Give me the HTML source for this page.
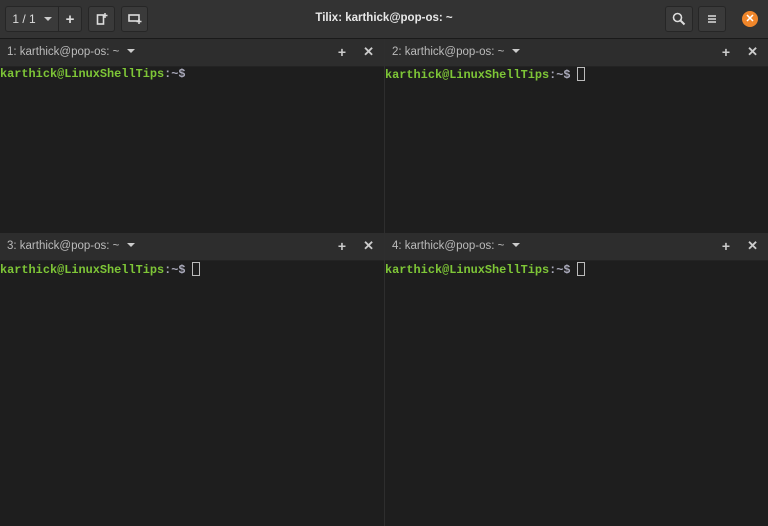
<!DOCTYPE html>
<html><head><style>
body{margin:0;width:768px;height:526px;background:#1e1e1e;font-family:"Liberation Sans",sans-serif;overflow:hidden;position:relative}
.hdr{position:absolute;left:0;top:0;width:768px;height:38px;background:#333333;border-bottom:1px solid #1a1a1a}
.btn{position:absolute;top:6px;height:26px;background:#3a3a3a;border:1px solid #262626;border-radius:3px;box-sizing:border-box;color:#ddd;font-size:12px;display:flex;align-items:center;justify-content:center}
.title{position:absolute;top:12px;left:0;width:768px;text-align:center;color:#e8e8e8;font-size:11.5px;font-weight:bold}
.pane{position:absolute;background:#1e1e1e}
.tb{position:absolute;left:0;top:0;right:0;height:27px;background:#2d2d2d;border-bottom:1px solid #232323;color:#bbb;font-size:11.5px}
.tb .t{position:absolute;left:7px;top:7px}
.tb .p{position:absolute;right:38px;top:5px;font-size:14px;font-weight:bold;color:#ccc}
.tb .x{position:absolute;right:10px;top:5px;font-size:13px;color:#ccc;font-weight:bold}
.pr{position:absolute;left:0;top:28px;font-family:"Liberation Mono",monospace;font-size:11.9px;font-weight:bold;color:#7ec637;white-space:pre}
.pr span{color:#aab}
.cur{display:inline-block;width:8px;height:14px;border:1px solid #bbb;box-sizing:border-box;vertical-align:-3px;margin-left:6px}
.caret{display:inline-block;border-left:4px solid transparent;border-right:4px solid transparent;border-top:4px solid #ccc;vertical-align:2px;margin-left:8px}
</style></head><body>
<div class="hdr">
<div class="btn" style="left:5px;width:54px;border-radius:3px 0 0 3px">1 / 1<span class="caret"></span></div>
<div class="btn" style="left:58px;width:24px;border-radius:0 3px 3px 0;font-size:15px;font-weight:bold">+</div>
<div class="btn" style="left:88px;width:27px"><svg width="12" height="14" viewBox="0 0 12 14"><rect x="1.5" y="3" width="6" height="9" fill="none" stroke="#ddd" stroke-width="1.6"/><path d="M9 1v5M6.5 3.5h5" stroke="#ddd" stroke-width="1.5"/></svg></div>
<div class="btn" style="left:121px;width:27px"><svg width="14" height="12" viewBox="0 0 14 12"><rect x="1" y="2" width="10" height="6" fill="none" stroke="#ddd" stroke-width="1.6"/><path d="M11 6v5M8.5 8.5h5" stroke="#ddd" stroke-width="1.5"/></svg></div>
<div class="title">Tilix: karthick@pop-os: ~</div>
<div class="btn" style="left:665px;width:28px"><svg width="14" height="14" viewBox="0 0 14 14"><circle cx="5.5" cy="5.5" r="4" fill="none" stroke="#ddd" stroke-width="1.6"/><path d="M8.5 8.5l4 4" stroke="#ddd" stroke-width="2"/></svg></div>
<div class="btn" style="left:698px;width:28px"><svg width="10" height="10" viewBox="0 0 10 10"><path d="M1 2h8M1 5h8M1 8h8" stroke="#ddd" stroke-width="1.5"/></svg></div>
<div style="position:absolute;left:742px;top:11px;width:16px;height:16px;border-radius:50%;background:#f0862a;color:#fff;font-size:11px;font-weight:bold;text-align:center;line-height:16px">✕</div>
</div>
<div class="pane" style="left:0;top:39px;width:384px;height:194px"><div class="tb"><span class="t">1: karthick@pop-os: ~<span class="caret"></span></span><span class="p">+</span><span class="x">✕</span></div><div class="pr">karthick@LinuxShellTips<span>:~$</span></div></div>
<div class="pane" style="left:385px;top:39px;width:383px;height:194px"><div class="tb"><span class="t">2: karthick@pop-os: ~<span class="caret"></span></span><span class="p">+</span><span class="x">✕</span></div><div class="pr">karthick@LinuxShellTips<span>:~$</span><i class="cur"></i></div></div>
<div class="pane" style="left:0;top:233px;width:384px;height:293px"><div class="tb"><span class="t">3: karthick@pop-os: ~<span class="caret"></span></span><span class="p">+</span><span class="x">✕</span></div><div class="pr" style="top:29px">karthick@LinuxShellTips<span>:~$</span><i class="cur"></i></div></div>
<div class="pane" style="left:385px;top:233px;width:383px;height:293px"><div class="tb"><span class="t">4: karthick@pop-os: ~<span class="caret"></span></span><span class="p">+</span><span class="x">✕</span></div><div class="pr" style="top:29px">karthick@LinuxShellTips<span>:~$</span><i class="cur"></i></div></div>
<div style="position:absolute;left:384px;top:39px;width:1px;height:487px;background:#2e2e2e"></div>
</body></html>
